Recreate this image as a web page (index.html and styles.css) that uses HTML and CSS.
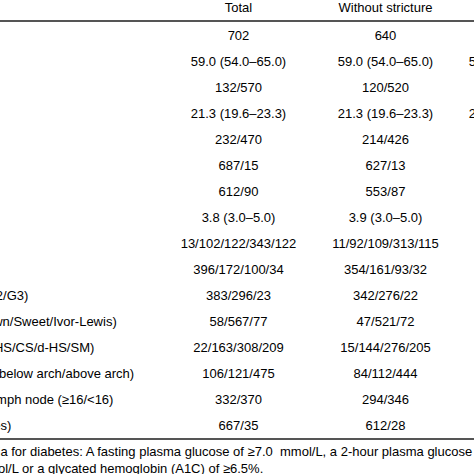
FILE: index.html
```html
<!DOCTYPE html>
<html lang="en">
<head>
<meta charset="utf-8">
<title>Patient characteristics</title>
<link rel="stylesheet" href="styles.css">
</head>
<body>
<div class="sheet">
  <table class="data">
    <colgroup>
      <col class="c-label">
      <col class="c-total">
      <col class="c-without">
      <col class="c-with">
      <col class="c-p">
    </colgroup>
    <thead>
      <tr>
        <th class="label">Variables</th>
        <th>Total</th>
        <th>Without stricture</th>
        <th>With stricture</th>
        <th>P</th>
      </tr>
    </thead>
    <tbody>
      <tr><td class="label">Number of patients</td><td>702</td><td>640</td><td>62</td><td></td></tr>
      <tr><td class="label">Age (years)</td><td>59.0 (54.0–65.0)</td><td>59.0 (54.0–65.0)</td><td>58.5 (53.0–64.0)</td><td>0.512</td></tr>
      <tr><td class="label">Sex (female/male)</td><td>132/570</td><td>120/520</td><td>12/50</td><td>0.941</td></tr>
      <tr><td class="label">BMI (kg/m²)</td><td>21.3 (19.6–23.3)</td><td>21.3 (19.6–23.3)</td><td>21.5 (19.8–23.4)</td><td>0.684</td></tr>
      <tr><td class="label">Smoking (yes/no)</td><td>232/470</td><td>214/426</td><td>18/44</td><td>0.571</td></tr>
      <tr><td class="label">Diabetes* (no/yes)</td><td>687/15</td><td>627/13</td><td>60/2</td><td>0.646</td></tr>
      <tr><td class="label">Hypertension (no/yes)</td><td>612/90</td><td>553/87</td><td>59/3</td><td>0.035</td></tr>
      <tr><td class="label">Operation time (h)</td><td>3.8 (3.0–5.0)</td><td>3.9 (3.0–5.0)</td><td>3.5 (2.8–4.5)</td><td>0.210</td></tr>
      <tr><td class="label">Tumor location</td><td>13/102/122/343/122</td><td>11/92/109/313/115</td><td>2/10/13/30/7</td><td>0.389</td></tr>
      <tr><td class="label">pTNM stage (I/II/III/IV)</td><td>396/172/100/34</td><td>354/161/93/32</td><td>42/11/7/2</td><td>0.274</td></tr>
      <tr><td class="label">Differentiation grade (G1/G2/G3)</td><td>383/296/23</td><td>342/276/22</td><td>41/20/1</td><td>0.152</td></tr>
      <tr><td class="label">Surgical approach (McKeown/Sweet/Ivor-Lewis)</td><td>58/567/77</td><td>47/521/72</td><td>11/46/5</td><td>0.047</td></tr>
      <tr><td class="label">Anastomosis approaches (HS/CS/d-HS/SM)</td><td>22/163/308/209</td><td>15/144/276/205</td><td>7/19/32/4</td><td>&lt;0.001</td></tr>
      <tr><td class="label">Anastomotic location (neck/below arch/above arch)</td><td>106/121/475</td><td>84/112/444</td><td>22/9/31</td><td>&lt;0.001</td></tr>
      <tr><td class="label">Total number of resected lymph node (≥16/&lt;16)</td><td>332/370</td><td>294/346</td><td>38/24</td><td>0.038</td></tr>
      <tr><td class="label">Anastomotic leakage (no/yes)</td><td>667/35</td><td>612/28</td><td>55/7</td><td>0.044</td></tr>
    </tbody>
  </table>
  <p class="note">*, Defined by the ADA criteria for diabetes: A fasting plasma glucose of ≥7.0&nbsp; mmol/L, a 2-hour plasma glucose value of ≥11.1 mmol/L, a random plasma<br>glucose value of ≥11.1&nbsp; mmol/L or a glycated hemoglobin (A1C) of ≥6.5%.</p>
</div>
</body>
</html>
```

FILE: styles.css
```css
html, body {
  margin: 0;
  padding: 0;
  background: #ffffff;
  overflow: hidden;
}

body {
  width: 474px;
  height: 474px;
  font-family: "Liberation Sans", Arial, sans-serif;
  font-size: 13px;
  color: #000000;
}

.sheet {
  margin: -5px 0 0 -160px;
  width: 900px;
}

.data {
  border-collapse: collapse;
  table-layout: fixed;
  width: 814px;
}

.c-label { width: 325px; }
.c-total { width: 147px; }
.c-without { width: 147px; }
.c-with { width: 115px; }
.c-p { width: 80px; }

.data th,
.data td {
  padding: 0;
  text-align: center;
  font-weight: normal;
  white-space: nowrap;
  line-height: 15px;
}

.data th {
  height: 25px;
  border-bottom: 2px solid #555555;
}

.data td {
  height: 26px;
}

.data .label {
  text-align: left;
}

.data tbody tr:last-child td {
  border-bottom: 2px solid #555555;
}

.note {
  margin: 4px 0 0 0;
  line-height: 16.5px;
  white-space: nowrap;
}
```
